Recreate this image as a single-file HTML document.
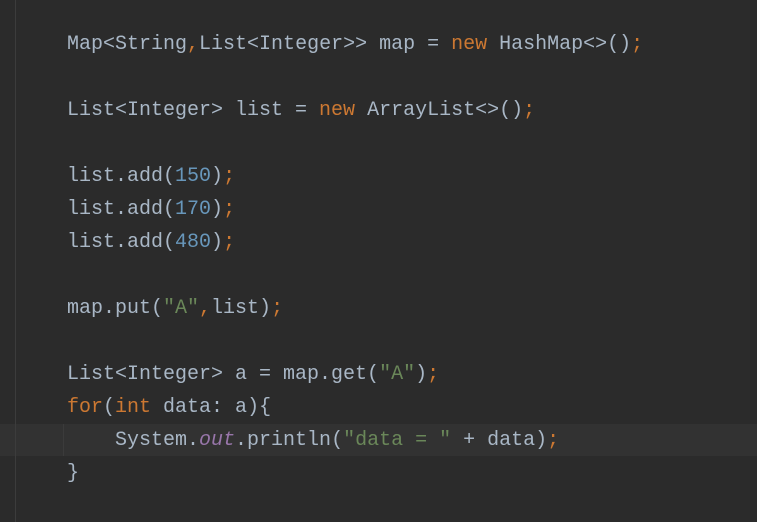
<!DOCTYPE html>
<html><head><style>
body{margin:0;width:757px;height:522px;background:#2b2b2b;overflow:hidden;position:relative;font-family:"Liberation Mono",monospace;font-size:20px;color:#a9b7c6}
.g{position:absolute;left:15px;top:0;width:1px;height:522px;background:#3c3c3c}
.hl{position:absolute;left:0;top:424px;width:757px;height:32px;background:#323232}
.ig{position:absolute;left:63px;top:424px;width:1px;height:32px;background:#3b3b3b}
.l{position:absolute;left:67px;white-space:pre;line-height:33px;height:33px}
.k{color:#cc7832}.n{color:#6897bb}.s{color:#6a8759}.o{color:#9876aa;font-style:italic}
</style></head><body>
<div class="hl"></div><div class="g"></div><div class="ig"></div>
<div class="l" style="top:28px">Map&lt;String<span class="k">,</span>List&lt;Integer&gt;&gt; map = <span class="k">new</span> HashMap&lt;&gt;()<span class="k">;</span></div>
<div class="l" style="top:94px">List&lt;Integer&gt; list = <span class="k">new</span> ArrayList&lt;&gt;()<span class="k">;</span></div>
<div class="l" style="top:160px">list.add(<span class="n">150</span>)<span class="k">;</span></div>
<div class="l" style="top:193px">list.add(<span class="n">170</span>)<span class="k">;</span></div>
<div class="l" style="top:226px">list.add(<span class="n">480</span>)<span class="k">;</span></div>
<div class="l" style="top:292px">map.put(<span class="s">"A"</span><span class="k">,</span>list)<span class="k">;</span></div>
<div class="l" style="top:358px">List&lt;Integer&gt; a = map.get(<span class="s">"A"</span>)<span class="k">;</span></div>
<div class="l" style="top:391px"><span class="k">for</span>(<span class="k">int</span> data: a){</div>
<div class="l" style="top:424px">    System.<span class="o">out</span>.println(<span class="s">"data = "</span> + data)<span class="k">;</span></div>
<div class="l" style="top:457px">}</div>
</body></html>
